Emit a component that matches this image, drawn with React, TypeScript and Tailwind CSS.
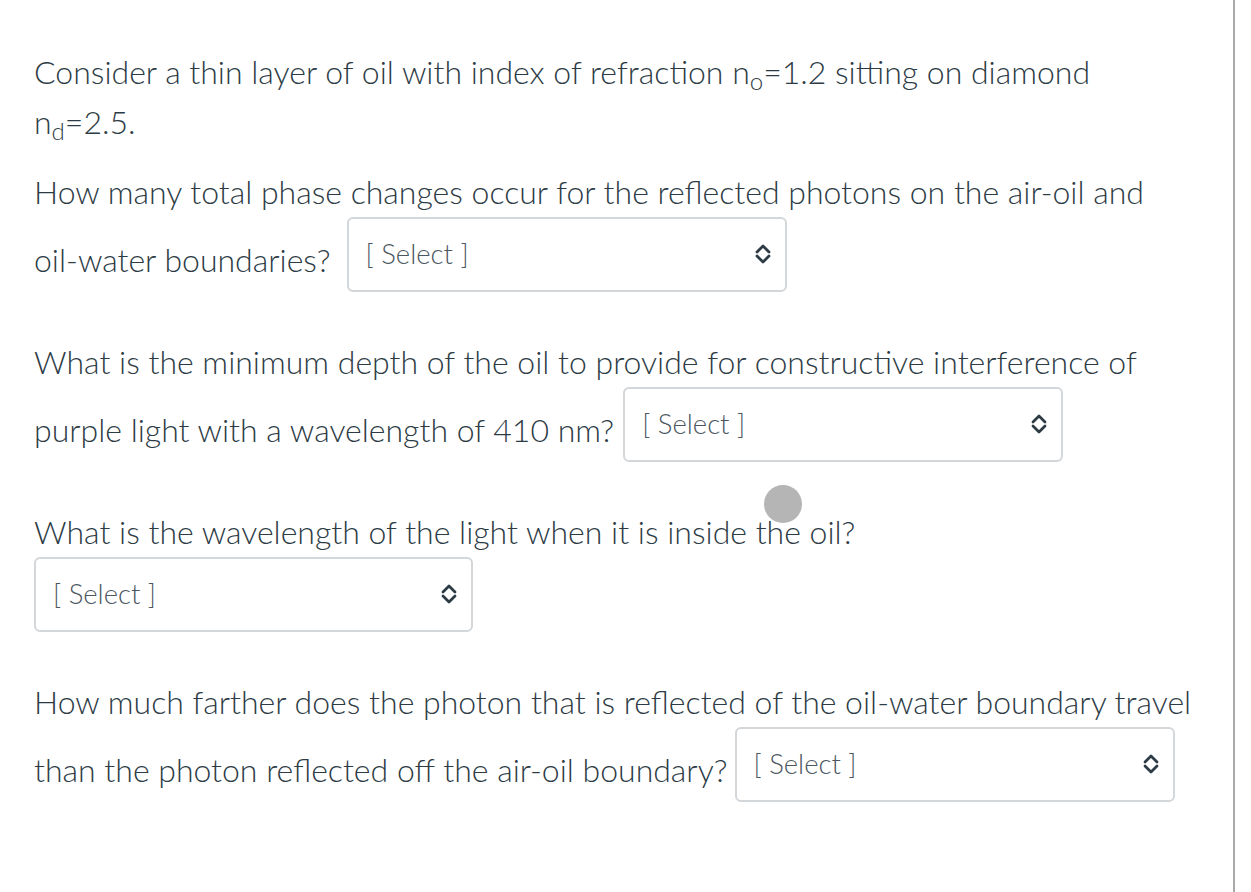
import React from 'react';

const SelectBox: React.FC<{ width: string }> = ({ width }) => (
  <div
    className={`${width} h-[75px] shrink-0 flex items-center justify-between pl-[17px] pr-[14px] border-2 border-[#d3d7da] rounded-md bg-white`}
  >
    <span className="text-[27.5px] font-light text-[#4a5660] leading-none mt-[-2px]">[ Select ]</span>
    <svg width="16" height="20" viewBox="0 0 16 20" fill="none" className="mt-[-2px]">
      <polyline points="2,8 8,2 14,8" stroke="#2d3b45" strokeWidth="2.8" strokeLinecap="round" strokeLinejoin="round" />
      <polyline points="2,12 8,18 14,12" stroke="#2d3b45" strokeWidth="2.8" strokeLinecap="round" strokeLinejoin="round" />
    </svg>
  </div>
);

export default function App() {
  return (
    <div className="relative w-[1235px] min-h-[892px] border-r-2 border-[#a9a9a9] bg-white pl-[34px] pt-[47px] text-[32px] font-light leading-[50px] text-[#2d3b45] font-['Lato','Liberation_Sans',sans-serif]">
      {/* question 1 */}
      <p className="whitespace-nowrap">
        Consider a thin layer of oil with index of refraction n<sub>o</sub>=1.2 sitting on diamond
        <br />
        n<sub>d</sub>=2.5.
      </p>

      {/* question 2 */}
      <div className="mt-[20px]">
        <p className="whitespace-nowrap">
          How many total phase changes occur for the reflected photons on the air-oil and
        </p>
        <div className="flex items-start">
          <span className="mt-[18px] whitespace-nowrap">oil-water boundaries?</span>
          <div className="ml-[16px]">
            <SelectBox width="w-[440px]" />
          </div>
        </div>
      </div>

      {/* question 3 */}
      <div className="mt-[45px]">
        <p className="whitespace-nowrap">
          What is the minimum depth of the oil to provide for constructive interference of
        </p>
        <div className="flex items-start">
          <span className="mt-[18px] whitespace-nowrap">purple light with a wavelength of 410 nm?</span>
          <div className="ml-[9px]">
            <SelectBox width="w-[440px]" />
          </div>
        </div>
      </div>

      {/* question 4 */}
      <div className="mt-[45px]">
        <p className="whitespace-nowrap">What is the wavelength of the light when it is inside the oil?</p>
        <div className="flex items-start">
          <SelectBox width="w-[439px]" />
        </div>
      </div>

      {/* question 5 */}
      <div className="mt-[45px]">
        <p className="whitespace-nowrap">
          How much farther does the photon that is reflected of the oil-water boundary travel
        </p>
        <div className="flex items-start">
          <span className="mt-[18px] whitespace-nowrap">than the photon reflected off the air-oil boundary?</span>
          <div className="ml-[7px]">
            <SelectBox width="w-[440px]" />
          </div>
        </div>
      </div>

      {/* cursor marker */}
      <div className="absolute left-[764px] top-[485px] w-[38px] h-[38px] rounded-full bg-[#b5b5b5]" />
    </div>
  );
}
